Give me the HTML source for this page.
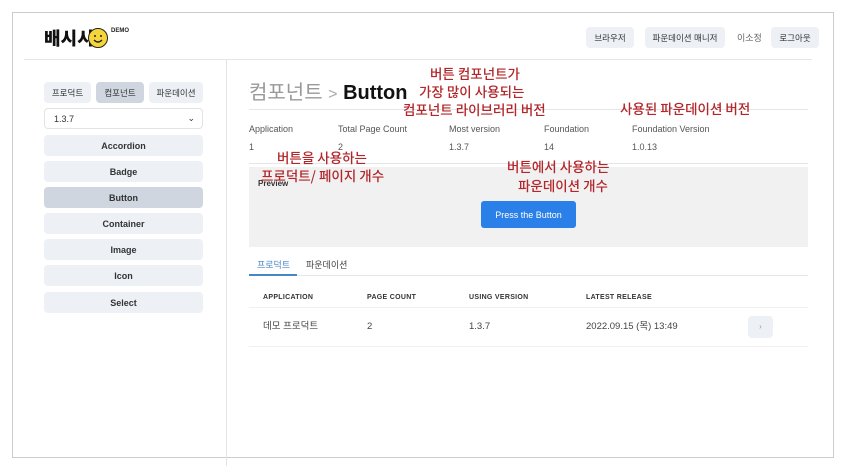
<!DOCTYPE html>
<html><head><meta charset="utf-8"><style>
*{margin:0;padding:0;box-sizing:border-box}
body{width:846px;height:472px;background:#fff;position:relative;overflow:hidden;font-family:"Liberation Sans","Noto Sans CJK KR",sans-serif;color:#333}
.a{position:absolute;line-height:12px}
.frame{left:12px;top:12px;width:822px;height:446px;border:1px solid #ccc}
.btn{background:#edf1f5;border-radius:4px;font-size:8.5px;color:#333;display:flex;align-items:center;justify-content:center}
.item{left:44px;width:159px;height:21px;background:#edf1f5;border-radius:4px;font-size:9px;font-weight:bold;color:#333;display:flex;align-items:center;justify-content:center}
.lab{font-size:9px;color:#555}
.red{color:#b3262a;font-size:13.5px;line-height:18px;white-space:nowrap;font-family:"Noto Sans CJK KR",sans-serif;font-weight:500}
.th{font-size:7px;font-weight:bold;color:#333;letter-spacing:.3px}
.td{font-size:9.5px;color:#444}
</style></head><body>
<div class="a frame"></div>
<div class="a" style="left:44px;top:28px;font-size:18px;font-weight:900;color:#111;font-family:'Noto Sans CJK KR',sans-serif;line-height:20px">배시시</div>
<div class="a" style="left:88px;top:28px;width:20px;height:20px;border-radius:50%;background:#f5d63a;border:1.5px solid #222"></div>
<svg class="a" style="left:88px;top:28px" width="20" height="20"><circle cx="7" cy="8" r="1" fill="#222"/><circle cx="13" cy="8" r="1" fill="#222"/><path d="M6 12 Q10 16 14 12" stroke="#222" stroke-width="1.3" fill="none"/></svg>
<div class="a" style="left:111px;top:25px;font-size:6px;font-weight:bold;color:#222">DEMO</div>
<div class="a btn" style="left:586px;top:27px;width:48px;height:21px">브라우저</div>
<div class="a btn" style="left:645px;top:27px;width:80px;height:21px">파운데이션 매니저</div>
<div class="a" style="left:737px;top:32px;font-size:9px;color:#666">이소정</div>
<div class="a btn" style="left:771px;top:27px;width:48px;height:21px">로그아웃</div>
<div class="a" style="left:24px;top:59px;width:788px;height:1px;background:#e6e6e6"></div>
<div class="a" style="left:226px;top:60px;width:1px;height:406px;background:#e3e3e3"></div>
<div class="a btn" style="left:44px;top:82px;width:47px;height:21px">프로덕트</div>
<div class="a btn" style="left:96px;top:82px;width:48px;height:21px;background:#cfd6df">컴포넌트</div>
<div class="a btn" style="left:149px;top:82px;width:54px;height:21px">파운데이션</div>
<div class="a" style="left:44px;top:108px;width:159px;height:21px;border:1px solid #e3e3e3;border-radius:4px;font-size:9px;padding:4px 9px;color:#333">1.3.7<span style="position:absolute;right:7px;top:3px;font-size:9px">⌄</span></div>
<div class="a item" style="top:135px">Accordion</div>
<div class="a item" style="top:161px">Badge</div>
<div class="a item" style="top:187px;background:#cfd6df">Button</div>
<div class="a item" style="top:213px">Container</div>
<div class="a item" style="top:239px">Image</div>
<div class="a item" style="top:265px">Icon</div>
<div class="a item" style="top:292px">Select</div>
<div class="a" style="left:249px;top:81px;font-size:20px;line-height:24px;white-space:nowrap"><span style="color:#999">컴포넌트</span> <span style="color:#aaa;font-size:16px">&gt;</span> <b style="color:#111">Button</b></div>
<div class="a" style="left:249px;top:109px;width:559px;height:1px;background:#e6e6e6"></div>
<div class="a lab" style="left:249px;top:123px">Application</div>
<div class="a lab" style="left:338px;top:123px">Total Page Count</div>
<div class="a lab" style="left:449px;top:123px">Most version</div>
<div class="a lab" style="left:544px;top:123px">Foundation</div>
<div class="a lab" style="left:632px;top:123px">Foundation Version</div>
<div class="a lab" style="left:249px;top:141px">1</div>
<div class="a lab" style="left:338px;top:141px">2</div>
<div class="a lab" style="left:449px;top:141px">1.3.7</div>
<div class="a lab" style="left:544px;top:141px">14</div>
<div class="a lab" style="left:632px;top:141px">1.0.13</div>
<div class="a" style="left:249px;top:163px;width:559px;height:1px;background:#e6e6e6"></div>
<div class="a" style="left:249px;top:167px;width:559px;height:80px;background:#f1f1f1"></div>
<div class="a" style="left:258px;top:178px;font-size:8px;font-weight:bold;color:#333">Preview</div>
<div class="a" style="left:481px;top:201px;width:95px;height:27px;background:#2a7fe8;border-radius:3px;color:#fff;font-size:9px;display:flex;align-items:center;justify-content:center">Press the Button</div>
<div class="a" style="left:257px;top:259px;font-size:9px;color:#4a86c5">프로덕트</div>
<div class="a" style="left:306px;top:259px;font-size:9px;color:#444">파운데이션</div>
<div class="a" style="left:249px;top:275px;width:559px;height:1px;background:#e3e8ee"></div>
<div class="a" style="left:249px;top:274px;width:48px;height:2px;background:#4a86c5"></div>
<div class="a th" style="left:263px;top:292px">APPLICATION</div>
<div class="a th" style="left:367px;top:292px">PAGE COUNT</div>
<div class="a th" style="left:469px;top:292px">USING VERSION</div>
<div class="a th" style="left:586px;top:292px">LATEST RELEASE</div>
<div class="a" style="left:249px;top:307px;width:559px;height:1px;background:#f0f0f0"></div>
<div class="a td" style="left:263px;top:321px">데모 프로덕트</div>
<div class="a td" style="left:367px;top:321px">2</div>
<div class="a td" style="left:469px;top:321px">1.3.7</div>
<div class="a td" style="left:586px;top:321px">2022.09.15 (목) 13:49</div>
<div class="a btn" style="left:748px;top:316px;width:25px;height:22px;font-size:8px;color:#999">›</div>
<div class="a" style="left:249px;top:346px;width:559px;height:1px;background:#f0f0f0"></div>
<div class="a red" style="left:430px;top:64px">버튼 컴포넌트가</div>
<div class="a red" style="left:419px;top:82px">가장 많이 사용되는</div>
<div class="a red" style="left:403px;top:100px">컴포넌트 라이브러리 버전</div>
<div class="a red" style="left:620px;top:99px">사용된 파운데이션 버전</div>
<div class="a red" style="left:277px;top:148px">버튼을 사용하는</div>
<div class="a red" style="left:261px;top:166px">프로덕트/ 페이지 개수</div>
<div class="a red" style="left:507px;top:157px">버튼에서 사용하는</div>
<div class="a red" style="left:518px;top:176px">파운데이션 개수</div>
</body></html>
